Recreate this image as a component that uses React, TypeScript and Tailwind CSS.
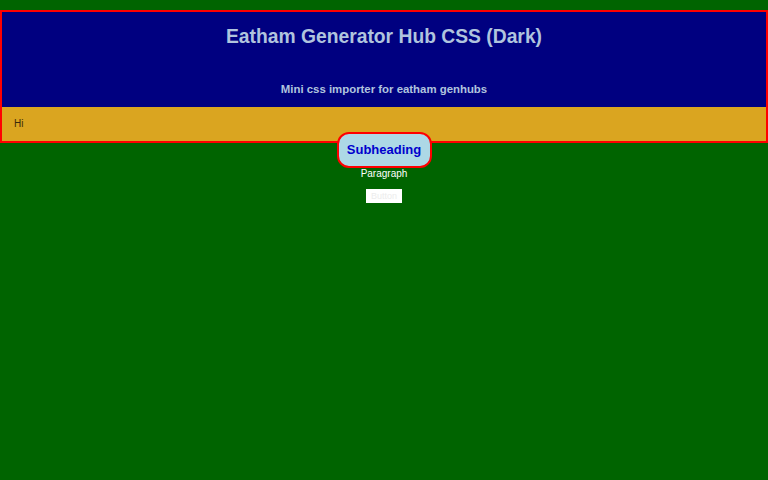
export default function App() {
  return (
    <div className="min-h-[480px] bg-[#006400] pt-[10px] font-['Liberation_Sans',Arial,sans-serif]">
      <div className="border-2 border-[#ff0000]">
        <header className="flex h-[95px] flex-col items-center bg-[#000080] text-[#b0c4de]">
          <h1 className="mt-[13px] text-[19.3px] font-bold leading-[23px]">
            Eatham Generator Hub CSS (Dark)
          </h1>
          <p className="mt-[35px] text-[11.4px] font-bold leading-[13px]">
            Mini css importer for eatham genhubs
          </p>
        </header>
        <div className="flex h-[34px] items-center bg-[#daa520] px-3 pb-[2px] text-[10px] text-[#3a2a0a]">
          Hi
        </div>
      </div>
      <div className="flex flex-col items-center">
        <h2 className="-mt-[11px] flex h-[36px] w-[95px] items-center justify-center rounded-[12px] border-2 border-[#ff0000] bg-[#add8e6] text-[13px] font-bold text-[#0000cd]">
          Subheading
        </h2>
        <p className="text-[10px] leading-[12px] text-white">Paragraph</p>
        <button className="mt-[9px] h-[14px] w-[36px] bg-white text-[9px] leading-[14px] text-[#ececec]">
          Button
        </button>
      </div>
    </div>
  );
}
